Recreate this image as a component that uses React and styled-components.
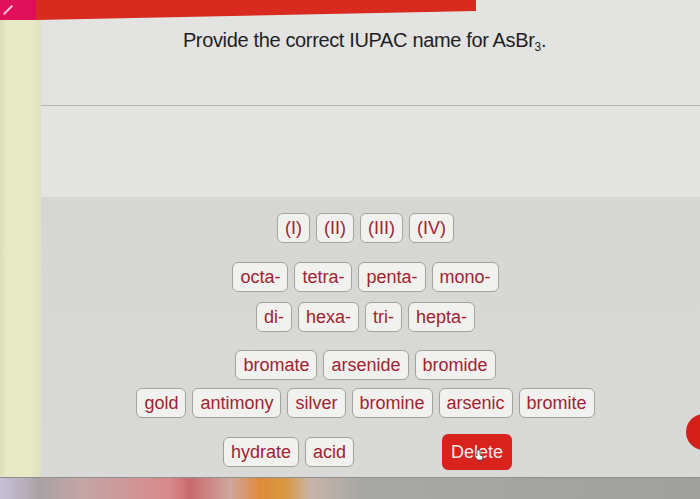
import React from "react";
import styled, { createGlobalStyle } from "styled-components";

const Global = createGlobalStyle`
  html, body { margin: 0; padding: 0; overflow: hidden; }
  body { font-family: "Liberation Sans", Arial, sans-serif; background: #b9b9b9; }
`;

const Screen = styled.div`
  width: 700px;
  height: 499px;
  display: flex;
  flex-direction: column;
  position: relative;
  overflow: hidden;
  background: #e3e3e1;
`;

const TopBar = styled.div`
  height: 20px;
  display: flex;
  flex-shrink: 0;
`;

const TopTab = styled.div`
  width: 36px;
  background: #df0f5a;
  position: relative;
  overflow: hidden;
`;

const TabMark = styled.div`
  position: absolute;
  left: 2px;
  top: 9px;
  width: 12px;
  height: 2px;
  background: #f6c9d6;
  transform: rotate(-45deg);
`;

const TopRed = styled.div`
  width: 440px;
  background: #d82a1e;
  clip-path: polygon(0 0, 100% 0, 100% 55%, 0 100%);
`;

const TopRest = styled.div`
  flex: 1;
  background: #e3e3e1;
`;

const Middle = styled.div`
  flex: 1;
  display: flex;
  min-height: 0;
`;

const SideStrip = styled.div`
  width: 41px;
  flex-shrink: 0;
  background: linear-gradient(90deg, #d9dcb6 0px, #e6e9c6 6px, #e8eac8 30px, #dfe2bd 41px);
  border-bottom-left-radius: 4px;
`;

const Panel = styled.div`
  flex: 1;
  display: flex;
  flex-direction: column;
`;

const QuestionBox = styled.div`
  height: 86px;
  border-bottom: 1px solid #b4b4b2;
  display: flex;
  justify-content: center;
  padding-top: 8px;
  box-sizing: border-box;
  padding-right: 12px;
`;

const Title = styled.div`
  font-size: 20px;
  line-height: 24px;
  color: #1f1f1f;
  letter-spacing: -0.35px;
`;

const Sub = styled.sub`
  font-size: 12px;
  vertical-align: -4px;
`;

const Blank = styled.div`
  height: 91px;
  background: #e4e4e2;
`;

const AnswerArea = styled.div`
  flex: 1;
  background: linear-gradient(180deg, #d6d6d4 0%, #d9d9d7 100%);
  display: flex;
  flex-direction: column;
  align-items: center;
  padding: 16px 10px 0 0;
  position: relative;
`;

const Group = styled.div`
  display: flex;
  flex-direction: column;
  align-items: center;
  gap: ${(p) => p.$gap}px;
  margin-bottom: ${(p) => p.$after}px;
`;

const Row = styled.div`
  display: flex;
  gap: 6px;
  align-self: ${(p) => (p.$start ? "flex-start" : "center")};
  margin-left: ${(p) => p.$indent || 0}px;
  align-items: center;
`;

const Chip = styled.div`
  height: 30px;
  box-sizing: border-box;
  padding: 0 7px;
  border: 1px solid #a2a2a0;
  border-radius: 6px;
  background: #f1f1ef;
  color: #a0242f;
  font-size: 18px;
  line-height: 28px;
  white-space: nowrap;
`;

const DeleteButton = styled.div`
  height: 36px;
  box-sizing: border-box;
  padding: 0 9px;
  margin-left: 82px;
  border-radius: 6px;
  background: #d7221d;
  color: #fbeaea;
  font-size: 18px;
  line-height: 36px;
  position: relative;
`;

const Cursor = styled.svg`
  position: absolute;
  left: 32px;
  top: 15px;
`;

const RedDot = styled.div`
  position: absolute;
  right: -22px;
  top: 217px;
  width: 36px;
  height: 36px;
  border-radius: 50%;
  background: #d42018;
`;

const BottomStrip = styled.div`
  height: 21px;
  flex-shrink: 0;
  background: linear-gradient(90deg, #c9c0d8 0px, #a9a2a4 40px, #c4a6a6 80px, #d9898b 170px, #c86a6c 190px, #d0a7a0 230px, #e08a3a 260px, #d9993f 285px, #c9b4a8 310px, #a8a8a6 360px, #a0a09e 700px);
  border-top: 1px solid #8f8f8d;
`;

const roman = ["(I)", "(II)", "(III)", "(IV)"];
const pre1 = ["octa-", "tetra-", "penta-", "mono-"];
const pre2 = ["di-", "hexa-", "tri-", "hepta-"];
const names1 = ["bromate", "arsenide", "bromide"];
const names2 = ["gold", "antimony", "silver", "bromine", "arsenic", "bromite"];

const Chips = ({ items }) => items.map((t) => <Chip key={t}>{t}</Chip>);

export default function App() {
  return (
    <>
      <Global />
      <Screen>
        <TopBar>
          <TopTab>
            <TabMark />
          </TopTab>
          <TopRed />
          <TopRest />
        </TopBar>
        <Middle>
          <SideStrip />
          <Panel>
            <QuestionBox>
              <Title>
                Provide the correct IUPAC name for AsBr<Sub>3</Sub>.
              </Title>
            </QuestionBox>
            <Blank />
            <AnswerArea>
              <Group $gap={0} $after={19}>
                <Row>
                  <Chips items={roman} />
                </Row>
              </Group>
              <Group $gap={10} $after={18}>
                <Row>
                  <Chips items={pre1} />
                </Row>
                <Row>
                  <Chips items={pre2} />
                </Row>
              </Group>
              <Group $gap={8} $after={16}>
                <Row>
                  <Chips items={names1} />
                </Row>
                <Row>
                  <Chips items={names2} />
                </Row>
              </Group>
              <Row $start $indent={182}>
                <Chip>hydrate</Chip>
                <Chip>acid</Chip>
                <DeleteButton>
                  Delete
                  <Cursor width="10" height="12" viewBox="0 0 10 12">
                    <path d="M3 1 v6 l-1.5 -1.2 l-1 1 l3 4.2 h5 l0.5 -4 l-3 -1 v-5 z" fill="#fff" stroke="#333" strokeWidth="0.8" />
                  </Cursor>
                </DeleteButton>
              </Row>
              <RedDot />
            </AnswerArea>
          </Panel>
        </Middle>
        <BottomStrip />
      </Screen>
    </>
  );
}
